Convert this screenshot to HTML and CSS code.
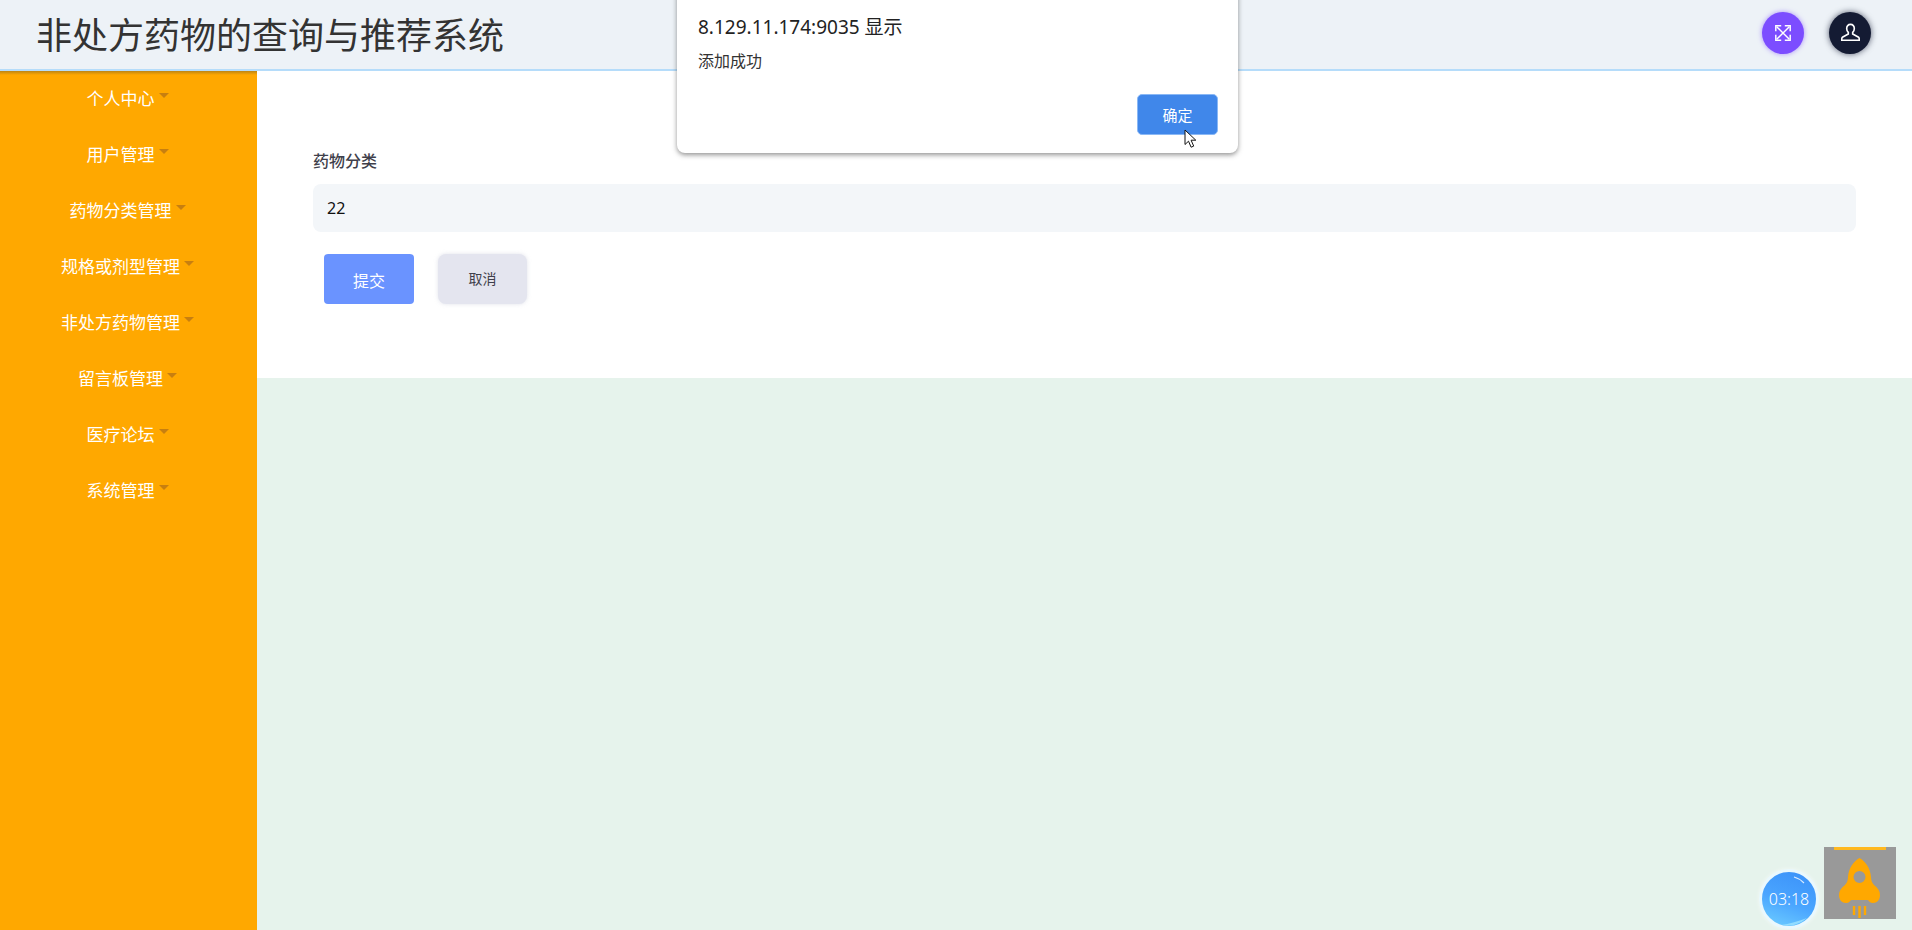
FILE: index.html
```html
<!DOCTYPE html>
<html lang="zh-CN">
<head>
  <meta charset="UTF-8">
  <meta name="viewport" content="width=device-width, initial-scale=1.0">
  <title>非处方药物的查询与推荐系统</title>
  <link rel="stylesheet" href="styles.css">
</head>
<body>
  <header class="topbar">
    <h1 class="site-title">非处方药物的查询与推荐系统</h1>
    <div class="topbar-actions">
      <button class="round-btn round-purple" type="button" aria-label="全屏">
        <svg width="18" height="18" viewBox="0 0 20 20" fill="none" stroke="#fff" stroke-width="1.600">
          <path d="M3 3l14 14M17 3L3 17"/>
          <path d="M2 8V2h6M12 2h6v6M18 12v6h-6M8 18H2v-6"/>
        </svg>
      </button>
      <button class="round-btn round-dark" type="button" aria-label="用户">
        <svg width="19" height="19" viewBox="0 0 20 20" fill="none" stroke="#fff" stroke-width="1.700">
          <path d="M10 1.500c-2.600 0-4 1.900-4 4.200 0 1.800.7 3.300 1.700 4.200v1.700L1.500 15c-.6.400-.8 1.200-.8 3.200h18.600c0-2-.2-2.800-.8-3.200l-6.200-3.400V9.900c1-.9 1.700-2.400 1.700-4.200 0-2.300-1.400-4.200-4-4.200z"/>
        </svg>
      </button>
    </div>
  </header>

  <div class="layout">
    <nav class="sidebar">
      <a class="menu-item">个人中心<span class="caret"></span></a>
      <a class="menu-item">用户管理<span class="caret"></span></a>
      <a class="menu-item">药物分类管理<span class="caret"></span></a>
      <a class="menu-item">规格或剂型管理<span class="caret"></span></a>
      <a class="menu-item">非处方药物管理<span class="caret"></span></a>
      <a class="menu-item">留言板管理<span class="caret"></span></a>
      <a class="menu-item">医疗论坛<span class="caret"></span></a>
      <a class="menu-item">系统管理<span class="caret"></span></a>
    </nav>

    <main class="main">
      <section class="form-card">
        <label class="field-label" for="fenlei">药物分类</label>
        <input class="field-input" type="text" id="fenlei" value="22">
        <div class="form-actions">
          <button class="btn-submit" type="button">提交</button>
          <button class="btn-cancel" type="button">取消</button>
        </div>
      </section>
    </main>
  </div>

  <div class="alert-box">
    <div class="alert-title">8.129.11.174:9035 显示</div>
    <div class="alert-msg">添加成功</div>
    <div class="alert-actions">
      <button class="alert-ok" type="button">确定</button>
    </div>
  </div>

  <svg class="cursor" width="14" height="20" viewBox="0 0 14 20">
    <path d="M1 1v14.500l3.500-3.300 2.600 6 2.600-1.100-2.600-5.900h4.700z" fill="#fff" stroke="#111" stroke-width="1"/>
  </svg>

  <div class="timer">
    <svg class="timer-shine" width="60" height="60" viewBox="0 0 60 60" fill="none">
      <path d="M35 8c4 1 7 3 10 6" stroke="#fff" stroke-width="1.200" opacity=".8"/>
      <path d="M22 56c8 2 18 0 26-7 -8 3-18 6-26 7z" fill="#9fe3ff" opacity=".8"/>
    </svg>
    <span class="timer-text">03:18</span>
  </div>

  <div class="rocket">
    <span class="rocket-bar"></span>
    <svg width="72" height="72" viewBox="0 0 72 72">
      <path fill="#ffa800" fill-rule="evenodd" d="M35.500 11C41 14 46.500 21 47 30c0 3 1 6 3 8 4 3 6 6 6 10 0 5-3 8-7 8-3 0-4-2-5-3H27c-1 1-2 3-5 3-4 0-7-3-7-8 0-4 2-7 6-10 2-2 3-5 3-8 .5-9 6-16 11.500-19zM35.500 24a6 6 0 1 0 0 12 6 6 0 0 0 0-12z"/>
      <path fill="none" stroke="#ffa800" stroke-width="2.400" d="M30 59v9M35.500 59v12M41 59v9"/>
    </svg>
  </div>
</body>
</html>
```

FILE: styles.css
```css
* {
  box-sizing: border-box;
}

html, body {
  height: 100%;
}

body {
  margin: 0;
  overflow: hidden;
  font-family: 'Noto Sans', 'Noto Sans CJK SC', sans-serif;
  background: #e6f3ec;
  color: #333;
}

.topbar {
  display: flex;
  align-items: center;
  justify-content: space-between;
  height: 71px;
  padding: 0 41px 0 36px;
  background: #edf2f7;
  border-bottom: 2px solid #b5dcfa;
}

.site-title {
  margin: 0;
  padding-bottom: 3px;
  font-size: 36px;
  font-weight: 400;
  color: #333;
}

.topbar-actions {
  display: flex;
  gap: 25px;
  padding-bottom: 4px;
}

.round-btn {
  display: flex;
  align-items: center;
  justify-content: center;
  width: 42px;
  height: 42px;
  padding: 0;
  border: none;
  border-radius: 50%;
}

.round-purple {
  background: #7c4dff;
  box-shadow: 0 0 5px rgba(124,77,255,0.6);
}

.round-dark {
  background: #141b33;
  box-shadow: 0 0 6px rgba(20,27,51,0.7);
}

.layout {
  display: flex;
  height: 859px;
}

.sidebar {
  flex: none;
  width: 257px;
  background: linear-gradient(rgba(90,80,50,0.4), rgba(90,80,50,0) 4px), #ffa800;
}

.menu-item {
  display: flex;
  align-items: center;
  justify-content: center;
  height: 56px;
  padding: 0 2px 3px 0;
  font-size: 17px;
  color: #fff;
}

.caret {
  width: 0;
  height: 0;
  margin: 0 0 4px 4px;
  border-top: 5px solid #c77f10;
  border-left: 5px solid transparent;
  border-right: 5px solid transparent;
}

.main {
  flex: 1;
}

.form-card {
  height: 307px;
  padding: 80px 56px 0 56px;
  background: #fff;
}

.field-label {
  display: block;
  height: 21px;
  font-size: 16px;
  font-weight: 500;
  line-height: 21px;
  color: #3f3f4b;
}

.field-input {
  display: block;
  width: 100%;
  height: 48px;
  margin-top: 12px;
  padding: 0 14px;
  border: none;
  border-radius: 8px;
  background: #f3f6f9;
  font-family: inherit;
  font-size: 16px;
  color: #111;
}

.form-actions {
  display: flex;
  gap: 24px;
  margin: 22px 0 0 11px;
}

.btn-submit, .btn-cancel {
  height: 50px;
  border: none;
  font-family: inherit;
}

.btn-submit {
  width: 90px;
  border-radius: 4px;
  background: #6a93ff;
  font-size: 16px;
  color: #fff;
  padding-top: 3px;
}

.btn-cancel {
  width: 89px;
  border-radius: 8px;
  background: #e4e5ef;
  box-shadow: 0 0 4px rgba(180,185,205,0.4);
  padding-bottom: 3px;
  font-size: 14px;
  color: #3f3f4b;
}

.alert-box {
  position: absolute;
  top: -10px;
  left: 677px;
  width: 561px;
  height: 163px;
  padding: 25px 20px 0 21px;
  background: #fff;
  border-radius: 0 0 8px 8px;
  box-shadow: 0 2px 5px rgba(60,60,60,0.55);
}

.alert-title {
  height: 24px;
  font-size: 19px;
  line-height: 24px;
  color: #222;
}

.alert-msg {
  height: 20px;
  margin-top: 12px;
  font-size: 16px;
  line-height: 20px;
  color: #333;
}

.alert-actions {
  display: flex;
  justify-content: flex-end;
  margin-top: 23px;
}

.alert-ok {
  width: 81px;
  height: 41px;
  border: 1px solid #8ab8f5;
  border-radius: 5px;
  background: #4087ea;
  font-family: inherit;
  font-size: 15px;
  color: #fff;
}

.cursor {
  position: absolute;
  top: 129px;
  left: 1184px;
}

.timer {
  position: absolute;
  top: 869px;
  left: 1759px;
  display: flex;
  align-items: center;
  justify-content: center;
  width: 60px;
  height: 60px;
  border: 3px solid #eaf8fd;
  border-radius: 50%;
  overflow: hidden;
  background: linear-gradient(200deg, #3a90f8 0%, #4aa5ff 55%, #6fcfff 100%);
  box-shadow: 0 0 4px rgba(255,255,255,0.6);
}

.timer-shine {
  position: absolute;
  top: -3px;
  left: -3px;
}

.timer-text {
  position: relative;
  font-size: 16px;
  font-weight: 300;
  color: #fff;
}

.rocket {
  position: absolute;
  top: 847px;
  left: 1824px;
  width: 72px;
  height: 72px;
  background: #999;
}

.rocket svg {
  display: block;
}

.rocket-bar {
  position: absolute;
  top: 0;
  left: 10px;
  width: 52px;
  height: 3px;
  background: #ffb81f;
}
```
